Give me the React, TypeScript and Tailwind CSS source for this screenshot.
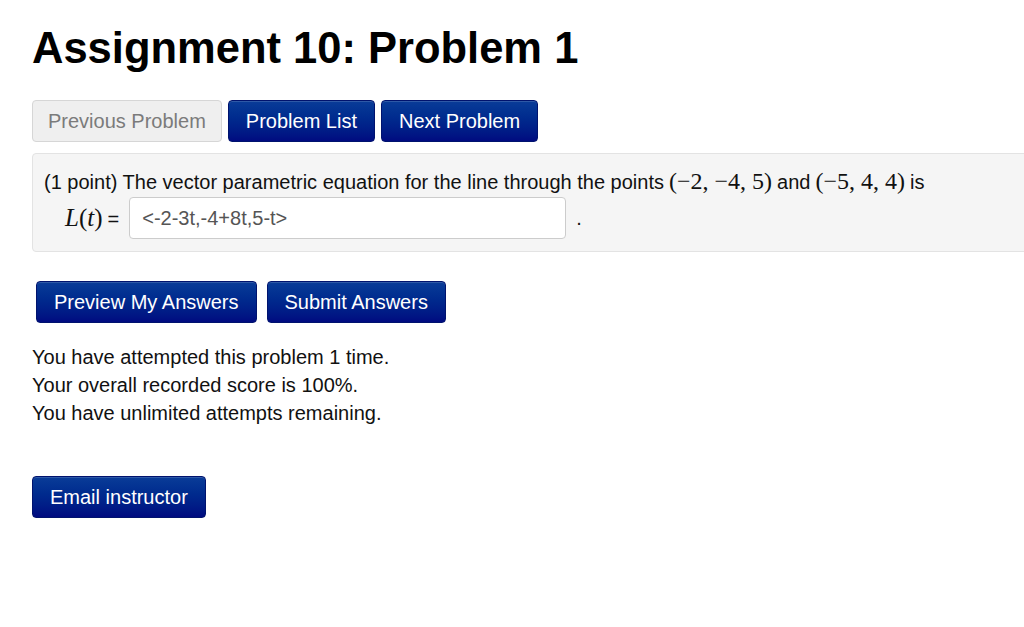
import React from "react";

const sans = "font-['Helvetica_Neue','Liberation_Sans',Arial,sans-serif]";
const serif = "font-['Liberation_Serif','Times_New_Roman',serif]";

// Navy WeBWorK-style button
function NavButton({ label, disabled = false }: { label: string; disabled?: boolean }) {
  if (disabled) {
    return (
      <button
        disabled
        className="h-[42px] px-[15px] rounded-[4px] border border-[#d6d6d6] bg-[#efefef] text-[#7b7b7b] text-[20px] leading-none"
      >
        {label}
      </button>
    );
  }
  return (
    <button className="h-[42px] px-[17px] rounded-[4px] border border-[#00136e] bg-gradient-to-b from-[#0a3c98] to-[#000a80] text-white text-[20px] leading-none shadow-[inset_0_1px_0_rgba(255,255,255,0.15)]">
      {label}
    </button>
  );
}

function Point({ coords }: { coords: string }) {
  return <span className={`${serif} text-[24px] mx-[5px]`}>{coords}</span>;
}

export default function App() {
  return (
    <div className={`min-h-screen w-full overflow-hidden bg-white text-[#111] ${sans}`}>
      <div className="pl-8 pt-[22px]">
        <h1 className="text-[43.5px] font-bold leading-[52px] text-black">
          Assignment 10: Problem 1
        </h1>

        <div className="mt-[26px] flex gap-[6px]">
          <NavButton label="Previous Problem" disabled />
          <NavButton label="Problem List" />
          <NavButton label="Next Problem" />
        </div>

        <div className="mt-[11px] w-[1010px] h-[99px] rounded-[4px] border border-[#e3e3e3] bg-[#f5f5f5] pl-[11px] pt-[12px]">
          <p className="text-[20px] leading-[30px]">
            (1 point) The vector parametric equation for the line through the points
            <Point coords="(−2, −4, 5)" />
            and
            <Point coords="(−5, 4, 4)" />
            is
          </p>
          <div className="flex items-center">
            <span className="pl-[21px] flex items-baseline">
              <span className={`${serif} text-[25px]`}>
                <i>L</i>(<i>t</i>)
              </span>
              <span className="text-[20px] ml-[5px]">=</span>
            </span>
            <input
              readOnly
              value="<-2-3t,-4+8t,5-t>"
              className={`ml-[10px] w-[437px] h-[42px] rounded-[4px] border border-[#cccccc] bg-white px-[12px] text-[20px] text-[#555555] outline-none ${sans}`}
            />
            <span className="ml-[10px] text-[20px]">.</span>
          </div>
        </div>

        <div className="mt-[29px] ml-[4px] flex gap-[10px]">
          <NavButton label="Preview My Answers" />
          <NavButton label="Submit Answers" />
        </div>

        <div className="mt-[20px] text-[20px] leading-[28px]">
          <p>You have attempted this problem 1 time.</p>
          <p>Your overall recorded score is 100%.</p>
          <p>You have unlimited attempts remaining.</p>
        </div>

        <div className="mt-[49px]">
          <NavButton label="Email instructor" />
        </div>
      </div>
    </div>
  );
}
